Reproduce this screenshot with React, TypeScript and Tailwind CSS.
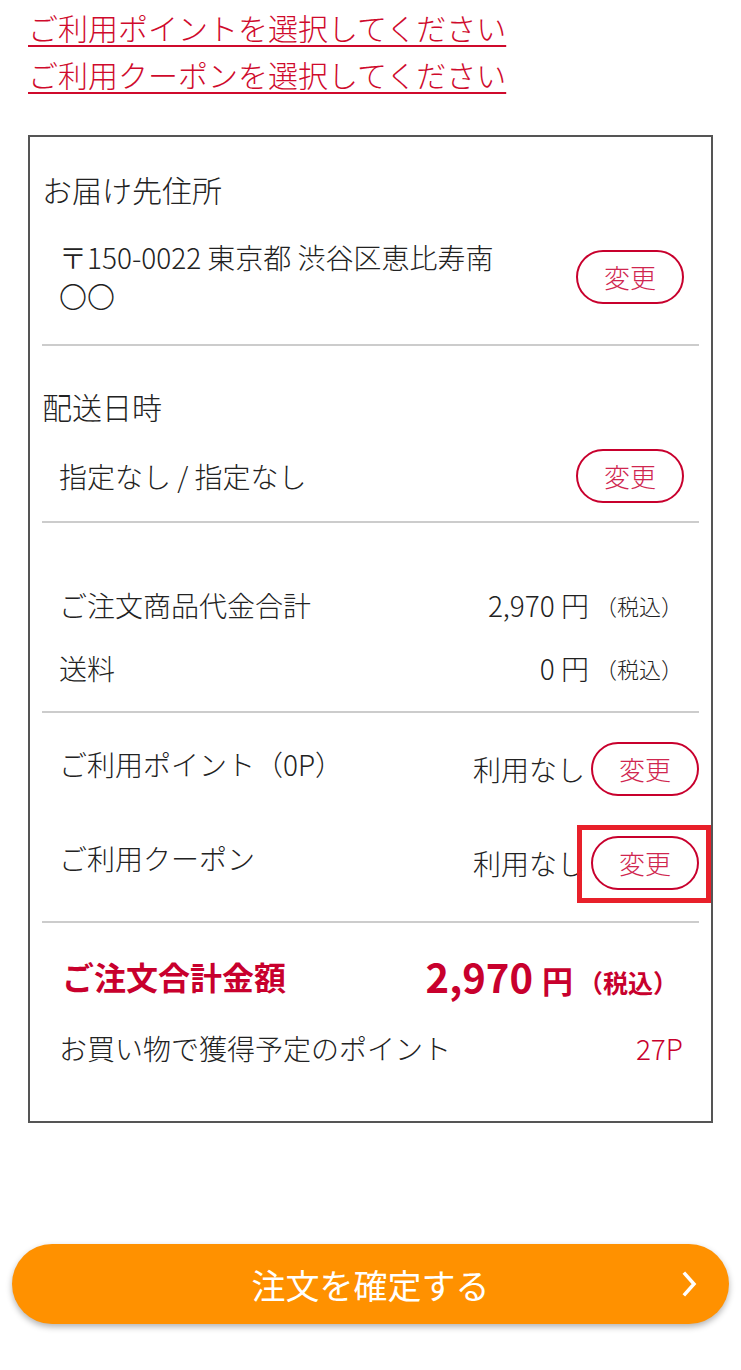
import { ReactNode } from "react";

const jp = "font-['Noto_Sans_CJK_JP','Noto_Sans',sans-serif]";

function ChangeButton({ className = "" }: { className?: string }) {
  return (
    <button
      type="button"
      className={`flex h-[54px] w-[108px] shrink-0 items-center justify-center rounded-full border-2 border-[#c8002d] bg-white text-[26px] font-light leading-none text-[#d0264f] ${className}`}
    >
      変更
    </button>
  );
}

function Divider() {
  return <div className="h-[2px] w-full bg-[#cccccc]" />;
}

function Heading({ children }: { children: ReactNode }) {
  return <h2 className="text-[30px] leading-[44px] text-[#222]">{children}</h2>;
}

function Tax({ className = "" }: { className?: string }) {
  return <span className={`text-[22px] leading-[44px] ${className}`}>（税込）</span>;
}

function ChevronIcon() {
  return (
    <svg width="18" height="26" viewBox="0 0 18 26" fill="none">
      <path
        d="M4 3L13 13L4 23"
        stroke="white"
        strokeWidth="3.5"
        strokeLinecap="square"
      />
    </svg>
  );
}

export default function App() {
  return (
    <div className={`min-h-[1370px] w-[741px] bg-white font-light ${jp}`}>
      {/* 選択リンク */}
      <div className="flex flex-col items-start pl-[28px] pt-[4px] text-[30px] leading-[47px] text-[#cf0a2c]">
        <a href="#" className="underline decoration-2 underline-offset-[5px]">
          ご利用ポイントを選択してください
        </a>
        <a href="#" className="underline decoration-2 underline-offset-[5px]">
          ご利用クーポンを選択してください
        </a>
      </div>

      {/* 注文内容 */}
      <section className="mx-[28px] mt-[37px] border-2 border-[#555] px-[12px] text-[#222]">
        {/* お届け先住所 */}
        <div className="pb-[28px] pt-[30px]">
          <Heading>お届け先住所</Heading>
          <div className="mt-[27px] flex items-center justify-between pl-[17px] pr-[15px]">
            <p className="text-[28px] leading-[39px]">
              〒150-0022 東京都 渋谷区恵比寿南
              <br />
              〇〇
            </p>
            <ChangeButton />
          </div>
        </div>
        <Divider />

        {/* 配送日時 */}
        <div className="pb-[18px] pt-[38px]">
          <Heading>配送日時</Heading>
          <div className="mt-[21px] flex items-center justify-between pl-[17px] pr-[15px]">
            <p className="text-[28px] leading-[44px]">指定なし / 指定なし</p>
            <ChangeButton />
          </div>
        </div>
        <Divider />

        {/* 金額 */}
        <div className="flex flex-col gap-[19px] pb-[21px] pl-[17px] pr-[16px] pt-[60px] text-[28px] leading-[44px]">
          <div className="flex h-[44px] items-center justify-between">
            <span>ご注文商品代金合計</span>
            <span className="flex h-[44px] items-center">
              2,970 円<Tax className="ml-[6px]" />
            </span>
          </div>
          <div className="flex h-[44px] items-center justify-between">
            <span>送料</span>
            <span className="flex h-[44px] items-center">
              0 円<Tax className="ml-[6px]" />
            </span>
          </div>
        </div>
        <Divider />

        {/* ポイント・クーポン */}
        <div className="flex flex-col gap-[40px] pb-[31px] pl-[17px] pt-[29px] text-[28px] leading-[44px]">
          <div className="flex items-center justify-between">
            <span className="pb-[10px]">ご利用ポイント（0P）</span>
            <div className="flex items-center gap-[6px]">
              <span>利用なし</span>
              <ChangeButton />
            </div>
          </div>
          <div className="flex items-center justify-between">
            <span className="pb-[10px]">ご利用クーポン</span>
            <div className="flex items-center gap-[6px]">
              <span>利用なし</span>
              <div className="relative">
                <ChangeButton />
                <div className="pointer-events-none absolute -bottom-[13px] -left-[14px] -right-[12px] -top-[11px] border-[5px] border-[#e8202a]" />
              </div>
            </div>
          </div>
        </div>
        <Divider />

        {/* 合計 */}
        <div className="pb-[51px] pl-[20px] pr-[16px] pt-[31px]">
          <div className="flex h-[44px] items-center justify-between font-bold text-[#c8002d]">
            <span className="text-[32px] leading-[44px]">ご注文合計金額</span>
            <span className="flex h-[44px] items-baseline pr-[5px] leading-[44px]">
              <span className="text-[40px]">2,970</span>
              <span className="ml-[9px] text-[31px]">円</span>
              <span className="ml-[5px] text-[25px]">（税込）</span>
            </span>
          </div>
          <div className="mt-[28px] flex h-[44px] items-center justify-between text-[28px] leading-[44px]">
            <span className="-ml-[3px]">お買い物で獲得予定のポイント</span>
            <span className="text-[#c8002d]">27P</span>
          </div>
        </div>
      </section>

      {/* 確定ボタン */}
      <div className="mt-[121px] px-[12px]">
        <button
          type="button"
          className="relative flex h-[80px] w-full items-center justify-center rounded-full bg-[#ff9100] text-[34px] font-normal text-white shadow-[0_3px_6px_rgba(0,0,0,0.3)]"
        >
          注文を確定する
          <span className="absolute right-[30px] top-1/2 -translate-y-1/2">
            <ChevronIcon />
          </span>
        </button>
      </div>
    </div>
  );
}
